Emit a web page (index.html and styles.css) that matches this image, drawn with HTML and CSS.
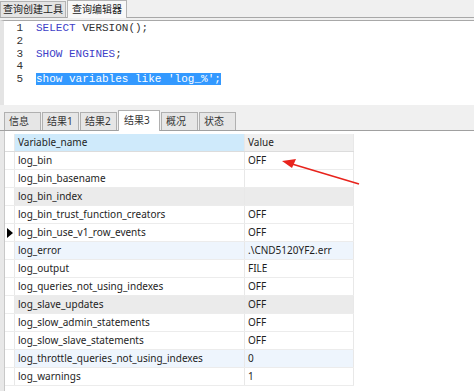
FILE: index.html
```html
<!DOCTYPE html>
<html lang="zh-CN">
<head>
    <meta charset="UTF-8">
    <title>查询编辑器</title>
    <link rel="stylesheet" href="styles.css">
</head>
<body>

    <div class="top-tabs">
        <div class="tab">查询创建工具</div>
        <div class="tab active">查询编辑器</div>
    </div>

    <div class="editor">
        <div class="gutter">
            <div>1</div>
            <div>2</div>
            <div>3</div>
            <div>4</div>
            <div>5</div>
        </div>
        <div class="code">
            <div class="line"><span class="kw">SELECT</span> VERSION();</div>
            <div class="line">&nbsp;</div>
            <div class="line"><span class="kw">SHOW ENGINES</span>;</div>
            <div class="line">&nbsp;</div>
            <div class="line"><span class="sel">show variables like 'log_%';</span></div>
        </div>
    </div>

    <div class="result-tabs">
        <div class="tab">信息</div>
        <div class="tab">结果1</div>
        <div class="tab">结果2</div>
        <div class="tab active">结果3</div>
        <div class="tab">概况</div>
        <div class="tab">状态</div>
    </div>

    <div class="results">
        <div class="strip"></div>
        <table class="grid">
            <thead>
                <tr>
                    <th class="ind"></th>
                    <th class="name sorted">Variable_name</th>
                    <th class="value">Value</th>
                </tr>
            </thead>
            <tbody>
                <tr><td class="ind"></td><td>log_bin</td><td>OFF</td></tr>
                <tr><td class="ind"></td><td>log_bin_basename</td><td></td></tr>
                <tr class="gray"><td class="ind"></td><td>log_bin_index</td><td></td></tr>
                <tr><td class="ind"></td><td>log_bin_trust_function_creators</td><td>OFF</td></tr>
                <tr><td class="ind"><span class="cursor"></span></td><td>log_bin_use_v1_row_events</td><td>OFF</td></tr>
                <tr class="blue"><td class="ind"></td><td>log_error</td><td>.\CND5120YF2.err</td></tr>
                <tr><td class="ind"></td><td>log_output</td><td>FILE</td></tr>
                <tr><td class="ind"></td><td>log_queries_not_using_indexes</td><td>OFF</td></tr>
                <tr class="gray"><td class="ind"></td><td>log_slave_updates</td><td>OFF</td></tr>
                <tr><td class="ind"></td><td>log_slow_admin_statements</td><td>OFF</td></tr>
                <tr><td class="ind"></td><td>log_slow_slave_statements</td><td>OFF</td></tr>
                <tr class="blue"><td class="ind"></td><td>log_throttle_queries_not_using_indexes</td><td>0</td></tr>
                <tr><td class="ind"></td><td>log_warnings</td><td>1</td></tr>
            </tbody>
        </table>
    </div>

    <svg class="arrow" width="474" height="391" viewBox="0 0 474 391">
        <line x1="359" y1="184" x2="292" y2="164" stroke="#e8231c" stroke-width="1.6"/>
        <polygon points="282,161 296,159 292,168" fill="#e8231c"/>
    </svg>

</body>
</html>
```

FILE: styles.css
```css
body {
    margin: 0;
    width: 474px;
    height: 391px;
    overflow: hidden;
    background: #f0f0f0;
    font-family: "Noto Sans", "Noto Sans CJK SC", sans-serif;
    font-size: 10px;
    color: #1e1e1e;
    position: relative;
}

/* top tab strip */
.top-tabs {
    display: flex;
    align-items: flex-end;
    height: 17px;
    border-bottom: 1px solid #a8a8a8;
}

.top-tabs .tab {
    height: 15px;
    line-height: 15px;
    padding: 0 2px;
    border: 1px solid #b4b4b4;
    border-bottom: none;
    background: #e4e4e4;
    margin-right: 1px;
    color: #222222;
}

.top-tabs .tab.active {
    height: 17px;
    line-height: 17px;
    background: #f8f8f8;
    margin-bottom: -1px;
    padding: 0 4px;
}

/* sql editor */
.editor {
    display: flex;
    height: 83px;
    margin-top: 2px;
    border-top: 1px solid #a8a8a8;
    border-left: 4px solid #e4e4e4;
    background: #ffffff;
    font-family: "Liberation Mono", monospace;
    font-size: 11px;
    line-height: 12.8px;
    padding-top: 1px;
    overflow: hidden;
}

.gutter {
    width: 19px;
    text-align: right;
    color: #333333;
}

.code {
    padding-left: 13px;
    color: #333333;
}

.line {
    white-space: pre;
}

.kw {
    color: #4040c8;
}

.sel {
    background: #3399ff;
    color: #ffffff;
}

/* result tabs */
.result-tabs {
    display: flex;
    align-items: flex-end;
    height: 25px;
    padding-left: 4px;
    border-bottom: 1px solid #a0a0a0;
}

.result-tabs .tab {
    height: 17px;
    line-height: 17px;
    min-width: 30px;
    padding: 0 1px 0 4px;
    border: 1px solid #b0b0b0;
    border-bottom: none;
    background: #e6e6e6;
    margin-right: 1px;
    color: #333333;
}

.result-tabs .tab.active {
    height: 19px;
    line-height: 18px;
    min-width: 34px;
    background: #ffffff;
    margin-bottom: -1px;
    padding: 0 1px 1px 5px;
}

/* data grid */
.results {
    display: flex;
    background: #ffffff;
    height: 270px;
}

.strip {
    width: 4px;
    background: #e8e8e8;
    border-right: 1px solid #c8c8c8;
    flex: none;
}

.grid {
    border-collapse: collapse;
    margin-top: 3px;
    margin-bottom: auto;
    table-layout: fixed;
    width: 349px;
}

.grid th,
.grid td {
    height: 17px;
    line-height: 17px;
    padding: 0 0 0 3px;
    border-bottom: 1px solid #ececec;
    border-right: 1px solid #e8e8e8;
    text-align: left;
    font-weight: normal;
    white-space: nowrap;
    overflow: hidden;
}

.grid th {
    background: #efefef;
    color: #1e1e1e;
    border-bottom: 1px solid #dcdcdc;
}

.grid th.sorted {
    background: #cfeafb;
}

.grid .ind {
    width: 9px;
    padding: 0;
    background: #ffffff;
}

.grid th.ind {
    background: #ffffff;
}

.grid .name {
    width: 226px;
}

.grid tr.gray td {
    background: #ebebeb;
}

.grid tr.blue td {
    background: #eef5fd;
}

.grid tr.gray td.ind,
.grid tr.blue td.ind {
    background: #ffffff;
}

.cursor {
    display: block;
    width: 0;
    height: 0;
    margin-left: 2px;
    border-left: 6px solid #000000;
    border-top: 5px solid transparent;
    border-bottom: 5px solid transparent;
}

.arrow {
    position: absolute;
    left: 0;
    top: 0;
    pointer-events: none;
}
```
